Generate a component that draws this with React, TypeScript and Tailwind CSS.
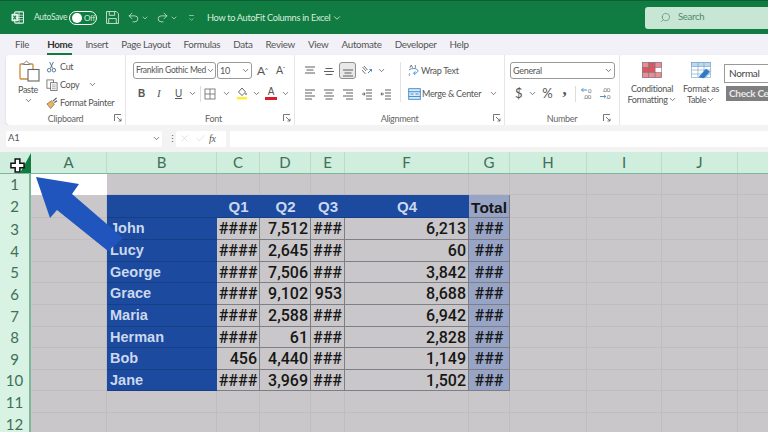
import { ChevronDown, Minus, Search, Undo2, Redo2, X, Check } from "lucide-react";

/* ======================
   DATA
====================== */
const tabs = ["Insert", "Page Layout", "Formulas", "Data", "Review", "View", "Automate", "Developer", "Help"];
const columns = [
  { name: "A", w: "w-[76px]" },
  { name: "B", w: "w-[110px]" },
  { name: "C", w: "w-[43px]" },
  { name: "D", w: "w-[51px]" },
  { name: "E", w: "w-[34px]" },
  { name: "F", w: "w-[124px]" },
  { name: "G", w: "w-[41px]" },
  { name: "H", w: "w-[77px]" },
  { name: "I", w: "w-[75px]" },
  { name: "J", w: "w-[76px]" },
  { name: "", w: "w-[76px]" },
];
const rowHeights = ["h-[21px]", "h-[23px]", "h-[22px]", "h-[22px]", "h-[21px]", "h-[22px]", "h-[22px]", "h-[21px]", "h-[22px]", "h-[21px]", "h-[22px]", "h-[22px]"];
const people = [
  ["John", "####", "7,512", "###", "6,213", "###"],
  ["Lucy", "####", "2,645", "###", "60", "###"],
  ["George", "####", "7,506", "###", "3,842", "###"],
  ["Grace", "####", "9,102", "953", "8,688", "###"],
  ["Maria", "####", "2,588", "###", "6,942", "###"],
  ["Herman", "####", "61", "###", "2,828", "###"],
  ["Bob", "456", "4,440", "###", "1,149", "###"],
  ["Jane", "####", "3,969", "###", "1,502", "###"],
];
const headerRow = ["", "Q1", "Q2", "Q3", "Q4", "Total"];

const uiFont = "font-['Lato','Noto_Sans',sans-serif]";
const sheetFont = "font-['Liberation_Sans',Arial,sans-serif]";

/* ======================
   SMALL ICONS
====================== */
function Chev({ className = "" }: { className?: string }) {
  return <ChevronDown className={`h-[9px] w-[9px] shrink-0 text-[#555] ${className}`} strokeWidth={2} />;
}

function Launcher() {
  return (
    <svg viewBox="0 0 8 8" className="h-[8px] w-[8px]" fill="none" stroke="#666" strokeWidth="0.9">
      <path d="M0.5 7V0.5H7M3 3l4 4M7 4.5V7H4.5" />
    </svg>
  );
}

function Lines({ d }: { d: string }) {
  return (
    <svg viewBox="0 0 12 12" className="h-[12px] w-[12px]" fill="none" stroke="#5f5f5f" strokeWidth="1">
      <path d={d} />
    </svg>
  );
}

function ExcelLogo() {
  return (
    <svg viewBox="0 0 14 14" className="h-[13px] w-[13px]">
      <rect x="4" y="1" width="9.5" height="12" rx="1" fill="none" stroke="#e6f3ec" strokeWidth="1.2" />
      <path d="M4 4.5h9.5M4 7h9.5M4 9.5h9.5M8.7 1v12" stroke="#e6f3ec" strokeWidth="0.8" />
      <rect x="0.5" y="3" width="7.5" height="8" rx="1" fill="#e6f3ec" />
      <path d="M2.5 5l3 4M5.5 5l-3 4" stroke="#107c41" strokeWidth="1.1" />
    </svg>
  );
}

function PasteIcon() {
  return (
    <svg viewBox="0 0 22 22" className="ml-[3px] h-[22px] w-[22px] shrink-0" fill="none">
      <rect x="1" y="4" width="13" height="15" rx="1" fill="#fff" stroke="#c98a3c" strokeWidth="1.3" />
      <path d="M4.5 4.5C5 2.5 6 2.5 7.5 1.2 9 2.5 10 2.5 10.5 4.5z" fill="#fff" stroke="#777" strokeWidth="1" />
      <rect x="9" y="9.5" width="11" height="11.5" fill="#fff" stroke="#666" strokeWidth="1.1" />
    </svg>
  );
}

function CutIcon() {
  return (
    <svg viewBox="0 0 12 13" className="h-[12px] w-[11px]" fill="none" stroke="#4a6d8c" strokeWidth="1">
      <path d="M4 1l3.2 7M8 1L4.8 8" />
      <circle cx="3.4" cy="10" r="1.9" />
      <circle cx="8.6" cy="10" r="1.9" />
    </svg>
  );
}

function CopyIcon() {
  return (
    <svg viewBox="0 0 13 13" className="h-[12px] w-[12px]" fill="#fff" stroke="#666" strokeWidth="0.9">
      <rect x="1" y="1" width="7" height="9" />
      <rect x="5" y="4" width="7" height="8.5" />
      <path d="M6.5 6.5h4M6.5 8.5h4M6.5 10.5h4" strokeWidth="0.6" />
    </svg>
  );
}

function PainterIcon() {
  return (
    <svg viewBox="0 0 13 13" className="h-[12px] w-[12px]" fill="none">
      <path d="M1 7.5L6 4l3 4-4 4.5z" fill="#e9b467" stroke="#8a6a3a" strokeWidth="0.8" />
      <path d="M7.5 4.5L11.5 1M9 6l3-2" stroke="#555" strokeWidth="1.3" />
    </svg>
  );
}

function BorderIcon() {
  return (
    <svg viewBox="0 0 12 12" className="h-[12px] w-[12px]" fill="none" stroke="#777" strokeWidth="0.9">
      <rect x="1" y="1" width="10" height="10" />
      <path d="M6 1v10M1 6h10" />
    </svg>
  );
}

function FillIcon() {
  return (
    <svg viewBox="0 0 12 13" className="h-[13px] w-[12px]" fill="none">
      <path d="M6 1l3.5 4L6 8.5 2.5 5z" stroke="#555" strokeWidth="0.9" />
      <circle cx="10" cy="7" r="1" fill="#888" />
      <rect x="1" y="10" width="10" height="2.5" fill="#ffee33" />
    </svg>
  );
}

function OrientIcon() {
  return (
    <svg viewBox="0 0 12 12" className="h-[12px] w-[12px]" fill="none" stroke="#666" strokeWidth="0.9">
      <path d="M1.5 2l3.5 4M3 1l3.5 4M1 5l3.5 4" />
      <path d="M7 8l3.5-3.5M10.5 4.5H8.5M10.5 4.5v2" stroke="#2b79c2" />
    </svg>
  );
}

function WrapIcon() {
  return (
    <svg viewBox="0 0 12 14" className="h-[13px] w-[11px]" fill="none" stroke="#2b79c2" strokeWidth="0.9">
      <path d="M1 6.5C4 4 9 4.5 10.5 6.5c1 2-1 3.5-4 3.5M8 8l-2 2 2 2" />
      <path d="M2 13c-1-1-1-2 0-3" stroke="#777" />
      <path d="M2 4l1.5-3L5 4M8 1v3.2" stroke="#666" />
    </svg>
  );
}

function MergeIcon() {
  return (
    <svg viewBox="0 0 13 12" className="h-[12px] w-[13px]" fill="#d8ebf8" stroke="#3a86c8" strokeWidth="0.9">
      <rect x="0.7" y="0.7" width="11.6" height="10.6" />
      <path d="M0.7 3.7h11.6M0.7 8.5h11.6M2.5 6h3M7.5 6h3" fill="none" />
    </svg>
  );
}

function DecimalIcon({ flip }: { flip?: boolean }) {
  return (
    <svg viewBox="0 0 12 13" className="h-[13px] w-[12px]" fill="none" fontFamily="Lato, sans-serif" fontSize="6">
      {flip ? (
        <>
          <text x="2.5" y="5" fill="#666">.00</text>
          <path d="M0 9.5h5.5M4 7.8l1.8 1.7L4 11.2" stroke="#3a86c8" strokeWidth="0.9" />
          <text x="6" y="12" fill="#666">.0</text>
        </>
      ) : (
        <>
          <path d="M6 3H.6M2.3 1.2L.5 3l1.8 1.8" stroke="#3a86c8" strokeWidth="0.9" />
          <text x="7" y="5.5" fill="#666">0</text>
          <text x="2.5" y="12" fill="#666">.00</text>
        </>
      )}
    </svg>
  );
}

function CondIcon() {
  return (
    <svg viewBox="0 0 20 16" className="h-[16px] w-[20px]" stroke="#777" strokeWidth="0.6">
      <rect x="0.5" y="0.5" width="19" height="15" fill="#fff" />
      <rect x="0.5" y="0.5" width="6.3" height="5" fill="#ee8a94" />
      <rect x="6.8" y="0.5" width="6.3" height="5" fill="#e2525f" />
      <rect x="13.1" y="0.5" width="6.4" height="5" fill="#ee8a94" />
      <rect x="0.5" y="5.5" width="6.3" height="5" fill="#e2525f" />
      <rect x="6.8" y="5.5" width="6.3" height="5" fill="#e2525f" />
      <rect x="0.5" y="10.5" width="6.3" height="5" fill="#ee8a94" />
      <rect x="6.8" y="10.5" width="6.3" height="5" fill="#ee8a94" />
      <rect x="13.1" y="10.5" width="6.4" height="5" fill="#ee8a94" />
    </svg>
  );
}

function TableIcon() {
  return (
    <svg viewBox="0 0 21 17" className="h-[17px] w-[21px]" stroke="#6f9fc8" strokeWidth="0.6">
      <rect x="0.5" y="0.5" width="19" height="15" fill="#fff" />
      <rect x="0.5" y="0.5" width="19" height="4" fill="#bcd8ef" />
      <path d="M7 .5v15M13 .5v15M.5 8h19M.5 12h19" fill="none" />
      <path d="M8 15l7-8 4 3-6 6z" fill="#2f78c4" stroke="#2f78c4" />
      <path d="M14 16l6-7" stroke="#9cc4e6" strokeWidth="1.2" />
    </svg>
  );
}

function GroupLabel({ label }: { label: string }) {
  return (
    <div className="relative mt-auto flex h-[13px] items-center justify-center text-[9px] text-[#666]">
      {label}
      <span className="absolute right-[3px] top-[2px]">
        <Launcher />
      </span>
    </div>
  );
}

function Cell17({ children }: { children: React.ReactNode }) {
  return <span className="flex h-[17px] w-[17px] items-center justify-center">{children}</span>;
}

/* ======================
   RIBBON
====================== */
function TitleBar() {
  return (
    <div className="flex h-[34px] items-center border-t border-[#0b5e33] bg-[#107c41] text-[#d9ecdf]">
      <div className="ml-[11px]">
        <ExcelLogo />
      </div>
      <span className="ml-[10px] w-[30px] text-[8.5px] whitespace-nowrap">AutoSave</span>
      <div className="ml-[5px] flex h-[14px] w-[28px] items-center rounded-full border border-white">
        <span className="ml-[2px] h-[10px] w-[10px] rounded-full bg-white" />
        <span className="ml-[2px] text-[8px] leading-none">Off</span>
      </div>
      <svg viewBox="0 0 12 12" className="ml-[9px] h-[13px] w-[13px]" fill="none" stroke="#d9ecdf" strokeWidth="0.8">
        <path d="M.5.5h9l2 2v9H.5zM3 .5v3.5h5V.5M2.5 11.5V7h7v4.5" />
      </svg>
      <Undo2 className="ml-[8px] h-[13px] w-[13px]" strokeWidth={1.4} />
      <ChevronDown className="ml-[1px] h-[8px] w-[8px]" />
      <Redo2 className="ml-[7px] h-[13px] w-[13px]" strokeWidth={1.4} />
      <ChevronDown className="ml-[1px] h-[8px] w-[8px]" />
      <div className="ml-[10px] flex flex-col items-center">
        <Minus className="-mb-[3px] h-[7px] w-[7px]" />
        <ChevronDown className="h-[7px] w-[7px]" />
      </div>
      <span className="ml-[12px] text-[9.2px] whitespace-nowrap">How to AutoFit Columns in Excel</span>
      <ChevronDown className="ml-[2px] h-[10px] w-[10px]" />
      <div className="ml-auto flex h-[22px] w-[123px] items-center rounded-l-[3px] bg-[#c8e6d4] text-[#4d8a6b]">
        <Search className="ml-[15px] h-[11px] w-[11px] -scale-x-100" strokeWidth={1.4} />
        <span className="ml-[7px] text-[9.5px]">Search</span>
      </div>
    </div>
  );
}

function TabRow() {
  return (
    <div className="flex h-[21px] items-center bg-[#f1f1f7] text-[9.8px] text-[#555]">
      <span className="ml-[15px]">File</span>
      <span className="relative ml-[18px] font-bold text-[#333]">
        Home
        <span className="absolute -bottom-[3px] left-0 h-[2px] w-full bg-[#107c41]" />
      </span>
      <div className="ml-[13px] flex gap-[13px]">
        {tabs.map((t) => (
          <span key={t} className="whitespace-nowrap">
            {t}
          </span>
        ))}
      </div>
    </div>
  );
}

function Ribbon() {
  return (
    <div className="bg-[#f1f1f7] pl-[6px]">
      <div className="flex h-[70px] rounded-l-[4px] bg-white text-[#555] shadow-[0_1px_2px_rgba(0,0,0,0.15)]">
        {/* Clipboard */}
        <div className="flex w-[120px] shrink-0 flex-col border-r border-[#e6e6e6]">
          <div className="flex pt-[5px]">
            <div className="ml-[11px] flex w-[22px] flex-col items-center">
              <PasteIcon />
              <span className="mt-[2px] text-[9px] leading-[12px]">Paste</span>
              <Chev />
            </div>
            <div className="ml-[7px] flex flex-col gap-[5px] text-[9px] leading-[13px] whitespace-nowrap">
              <div className="flex items-center gap-[3px]">
                <CutIcon />
                Cut
              </div>
              <div className="flex items-center gap-[2px]">
                <CopyIcon />
                Copy
                <Chev className="ml-[7px]" />
              </div>
              <div className="flex items-center gap-[2px]">
                <PainterIcon />
                Format Painter
              </div>
            </div>
          </div>
          <GroupLabel label="Clipboard" />
        </div>

        {/* Font */}
        <div className="flex w-[169px] shrink-0 flex-col border-r border-[#e6e6e6] pl-[7px]">
          <div className="mt-[7px] flex items-center">
            <div className="flex h-[17px] w-[83px] items-center justify-between rounded-[3px] border border-[#9a9a9a] pl-[2px] pr-[1px] text-[8.5px] whitespace-nowrap">
              Franklin Gothic Med
              <Chev />
            </div>
            <div className="ml-[1px] flex h-[17px] w-[35px] items-center justify-between rounded-[3px] border border-[#9a9a9a] pl-[2px] pr-[1px] text-[9px]">
              10
              <Chev />
            </div>
            <span className="ml-[5px] text-[12px] leading-none">
              A<sup className="text-[6px]">^</sup>
            </span>
            <span className="ml-[8px] text-[10.5px] leading-none">
              A<sup className="text-[6px]">ˇ</sup>
            </span>
          </div>
          <div className="mt-[6px] flex h-[17px] items-center text-[#555]">
            <span className="ml-[5px] w-[10px] font-['Liberation_Sans'] text-[10px] font-bold">B</span>
            <span className="ml-[9px] w-[10px] font-['Liberation_Serif'] text-[11px] italic">I</span>
            <span className="ml-[8px] w-[10px] font-['Liberation_Sans'] text-[10px] underline">U</span>
            <Chev className="ml-[3px]" />
            <span className="mx-[3px] h-[16px] w-px bg-[#ddd]" />
            <BorderIcon />
            <Chev className="ml-[6px]" />
            <span className="ml-[5px]">
              <FillIcon />
            </span>
            <Chev className="ml-[4px]" />
            <div className="ml-[4px] flex flex-col items-center leading-none">
              <span className="font-['Liberation_Sans'] text-[10px] leading-[9px]">A</span>
              <span className="mt-[1px] h-[3px] w-[12px] bg-[#d81e2a]" />
            </div>
            <Chev className="ml-[4px]" />
          </div>
          <GroupLabel label="Font" />
        </div>

        {/* Alignment */}
        <div className="flex w-[210px] shrink-0 flex-col border-r border-[#e6e6e6]">
          <div className="flex">
            <div className="ml-[6px] mt-[7px] flex flex-col gap-[6px]">
              <div className="flex h-[17px] items-center gap-[2px]">
                <Cell17>
                  <Lines d="M1 2h10M2.5 5h7M1 8h10" />
                </Cell17>
                <Cell17>
                  <Lines d="M2.5 3.5h7M1 6.5h10M2.5 9.5h7" />
                </Cell17>
                <span className="flex h-[17px] w-[17px] items-center justify-center rounded-[3px] border border-[#8f8f8f] bg-[#e8e8e8]">
                  <Lines d="M1 5h10M2.5 8h7M1 11h10" />
                </span>
                <Cell17>
                  <OrientIcon />
                </Cell17>
                <span className="flex h-[17px] w-[17px] items-center">
                  <Chev />
                </span>
              </div>
              <div className="flex h-[17px] items-center gap-[2px]">
                <Cell17>
                  <Lines d="M1 2h10M1 5h7M1 8h10M1 11h7" />
                </Cell17>
                <Cell17>
                  <Lines d="M1 2h10M2.5 5h7M1 8h10M2.5 11h7" />
                </Cell17>
                <Cell17>
                  <Lines d="M1 2h10M4 5h7M1 8h10M4 11h7" />
                </Cell17>
                <Cell17>
                  <Lines d="M5 2h6M5 5h6M5 8h6M5 11h6M1 6h3M3 4.5l1 1.5-1 1.5" />
                </Cell17>
                <Cell17>
                  <Lines d="M5 2h6M5 5h6M5 8h6M5 11h6M4 6H1M2 4.5L1 6l1 1.5" />
                </Cell17>
              </div>
            </div>
            <div className="ml-[6px] mt-[7px] h-[40px] w-px bg-[#e2e2e2]" />
            <div className="ml-[7px] mt-[7px] flex flex-col gap-[6px] text-[9px] whitespace-nowrap">
              <div className="flex h-[17px] items-center gap-[2px]">
                <WrapIcon />
                Wrap Text
              </div>
              <div className="flex h-[17px] items-center gap-[1px]">
                <MergeIcon />
                Merge &amp; Center
                <Chev className="ml-[7px]" />
              </div>
            </div>
          </div>
          <GroupLabel label="Alignment" />
        </div>

        {/* Number */}
        <div className="flex w-[115px] shrink-0 flex-col border-r border-[#e6e6e6] px-[5px]">
          <div className="mt-[7px] flex h-[17px] w-[105px] items-center justify-between rounded-[3px] border border-[#9a9a9a] pl-[2px] pr-[1px] text-[9px]">
            General
            <Chev />
          </div>
          <div className="mt-[6px] flex h-[17px] items-center">
            <span className="ml-[5px] text-[13px] leading-none">$</span>
            <Chev className="ml-[6px]" />
            <span className="ml-[5px] text-[13px] leading-none">%</span>
            <span className="mb-[8px] ml-[10px] font-['Liberation_Serif'] text-[17px] font-bold leading-[10px]">,</span>
            <span className="ml-[9px] h-[16px] w-px bg-[#ddd]" />
            <span className="ml-[5px]">
              <DecimalIcon />
            </span>
            <span className="ml-[7px]">
              <DecimalIcon flip />
            </span>
          </div>
          <GroupLabel label="Number" />
        </div>

        {/* Styles */}
        <div className="flex min-w-0 flex-1 pt-[7px] text-[9px] leading-[11px] whitespace-nowrap">
          <div className="ml-[3px] flex w-[58px] shrink-0 flex-col items-center">
            <CondIcon />
            <span className="mt-[5px]">Conditional</span>
            <span className="flex items-center">
              Formatting
              <Chev />
            </span>
          </div>
          <div className="flex w-[40px] shrink-0 flex-col items-center">
            <TableIcon />
            <span className="mt-[4px]">Format as</span>
            <span className="flex items-center">
              Table
              <Chev />
            </span>
          </div>
          <div className="ml-[3px] mt-[2px] flex min-w-0 flex-1 flex-col gap-[3px]">
            <div className="flex h-[19px] items-center border border-r-0 border-[#9a9a9a] pl-[4px] text-[10px] text-[#444]">Normal</div>
            <div className="ml-[2px] flex h-[15px] items-center overflow-hidden bg-[#7f7f7f] pl-[3px] text-[10px] font-bold text-[#e8e8e8]">
              Check Cell
            </div>
          </div>
        </div>
      </div>
    </div>
  );
}

function FormulaBar() {
  return (
    <div className="flex h-[27px] items-center bg-[#f3f3f3] pl-[6px] text-[#555]">
      <div className="flex h-[16px] w-[156px] items-center justify-between rounded-[2px] bg-white pl-[2px] pr-[1px] text-[9.5px]">
        A1
        <ChevronDown className="h-[9px] w-[9px]" />
      </div>
      <span className="ml-[6px] w-[3px] text-[9px] leading-none">⋮</span>
      <div className="ml-[5px] flex h-[16px] w-[50px] items-center rounded-[2px] bg-white pl-[3px] text-[#c4c4c4]">
        <X className="h-[11px] w-[11px]" strokeWidth={1} />
        <Check className="ml-[5px] h-[11px] w-[11px]" strokeWidth={1} />
        <span className="ml-[3px] font-['Liberation_Serif'] text-[10px] italic text-[#555]">fx</span>
      </div>
      <div className="ml-[4px] h-[16px] flex-1 bg-white" />
    </div>
  );
}

/* ======================
   SHEET
====================== */
function TableCell({ row, col, text }: { row: number; col: number; text: string }) {
  const isHeader = row === 1;
  const isTotal = col === 5;
  const isName = col === 0;
  const blue = (isHeader && !isTotal) || isName;
  let tone = "bg-[#c9c7c9] text-[#161616]";
  if (blue) tone = "bg-[#1b4a9e] text-[#ccd8ee]";
  if (isTotal) tone = "bg-[#98a4c5] text-[#161616]";
  let align = "justify-end pr-[2px]";
  if (isHeader || isTotal || text === "###" || text === "####") align = "justify-center";
  if (isName) align = "justify-start pl-[3px]";
  const borders = blue ? "border-b border-[#173f88]" : "border-b border-r border-[#7d7f84]";
  let type = "pt-[1px] text-[16px] font-medium font-['Roboto',sans-serif]";
  if (isName) type = "pt-[1px] text-[14.5px] font-bold";
  if (isHeader) type = isTotal ? "pt-[3px] text-[15.5px] font-bold" : "pt-[3px] text-[15px] font-bold";
  return <div className={`flex h-full items-center ${align} ${tone} ${borders} ${type}`}>{text}</div>;
}

function Sheet() {
  return (
    <div className={`relative flex-1 overflow-hidden bg-[#c9c7c9] tracking-normal ${sheetFont}`}>
      <div className="flex h-[22px] border-b border-[#7eb89a] bg-[#cfeedd]">
        <div className="flex w-[31px] shrink-0 items-end justify-end">
          <svg viewBox="0 0 11 20" className="h-[20px] w-[11px]">
            <path d="M11 0V20H0z" fill="#107c41" />
          </svg>
        </div>
        {columns.map((c, i) => (
          <div key={i} className={`flex ${c.w} shrink-0 items-center justify-center border-r border-[#bcdccb] text-[15px] text-[#3f6f58] ${uiFont}`}>
            {c.name}
          </div>
        ))}
      </div>
      {rowHeights.map((h, r) => {
        const data = r === 1 ? headerRow : r >= 2 && r <= 9 ? people[r - 2] : null;
        return (
          <div key={r} className={`flex ${h}`}>
            <div className={`flex w-[31px] shrink-0 items-center justify-center border-r-2 border-[#7eb89a] bg-[#d8f2e4] text-[15px] leading-none text-[#3f6f58] ${uiFont}`}>
              {r + 1}
            </div>
            {columns.map((c, i) => {
              const inTable = data && i >= 1 && i <= 6;
              if (inTable) {
                return (
                  <div key={i} className={`${c.w} shrink-0`}>
                    <TableCell row={r} col={i - 1} text={data[i - 1]} />
                  </div>
                );
              }
              const white = r === 0 && i === 0;
              return <div key={i} className={`${c.w} shrink-0 border-b border-r ${white ? "border-white bg-white" : "border-[#bfbdbf]"}`} />;
            })}
          </div>
        );
      })}

      {/* select-all cursor */}
      <svg viewBox="0 0 16 16" className="absolute left-[10px] top-[6px] h-[15px] w-[15px]">
        <path d="M5.5 1h5v4.5H15v5h-4.5V15h-5v-4.5H1v-5h4.5z" fill="#fff" stroke="#111" strokeWidth="1.6" />
      </svg>

      {/* arrow pointing at the corner */}
      <svg viewBox="0 0 140 110" className="absolute left-0 top-0 h-[110px] w-[140px]">
        <path d="M36 25L79 32 72 42 123 86 108 99 57 58 50 66z" fill="#1f55bd" />
      </svg>
    </div>
  );
}

export default function App() {
  return (
    <div className={`flex h-[432px] w-[768px] flex-col overflow-hidden bg-white tracking-[-0.3px] ${uiFont}`}>
      <TitleBar />
      <TabRow />
      <Ribbon />
      <FormulaBar />
      <Sheet />
    </div>
  );
}
